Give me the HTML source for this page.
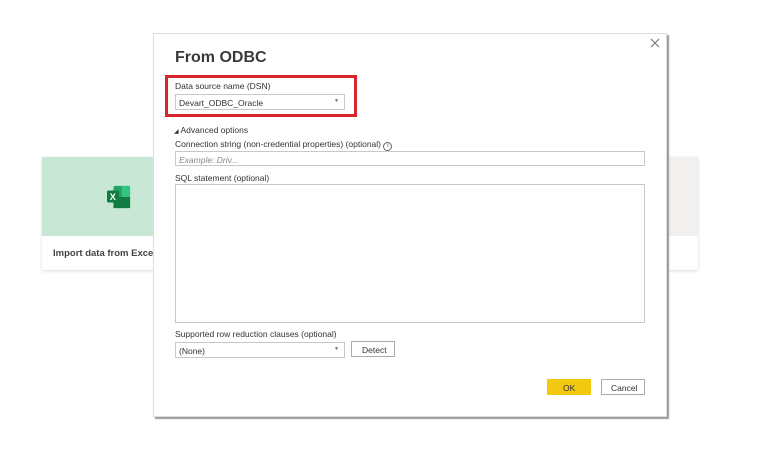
<!DOCTYPE html>
<html><head><style>
body{margin:0;width:768px;height:463px;background:#fff;position:relative;overflow:hidden;font-family:"Liberation Sans",sans-serif;color:#333}
.a{position:absolute}
.lbl{font-size:8.5px;color:#333;white-space:nowrap}
.box{border:1px solid #c8c8c8;background:#fff;box-sizing:border-box}
</style></head><body>
<div class="a" style="left:42px;top:157px;width:120px;height:113px;background:#fff;box-shadow:0 1px 3px rgba(0,0,0,.15)"></div>
<div class="a" style="left:42px;top:157px;width:120px;height:79px;background:#c8e8d5"></div>
<div class="a" style="left:53px;top:248px;font-size:9.5px;font-weight:bold;color:#444;white-space:nowrap">Import data from Excel</div>
<svg class="a" style="left:106px;top:185px" width="26" height="24" viewBox="0 0 28 26">
<rect x="8" y="1" width="18" height="24" rx="2" fill="#21a366"/><rect x="8" y="13" width="18" height="12" fill="#107c41"/><rect x="17" y="1" width="9" height="12" fill="#33c481"/>
<rect x="1" y="6" width="13" height="13" rx="1.5" fill="#107c41"/><text x="4" y="16.5" font-size="10" font-weight="bold" fill="#fff" font-family="Liberation Sans">X</text></svg>
<div class="a" style="left:650px;top:157px;width:48px;height:113px;background:#fff;box-shadow:0 1px 3px rgba(0,0,0,.15)"></div>
<div class="a" style="left:650px;top:157px;width:48px;height:79px;background:#f1f0ef"></div>

<div class="a" style="left:153px;top:33px;width:514px;height:384px;background:#fff;border:1px solid #ddd;box-sizing:border-box;box-shadow:2px 2px 1px #999"></div>
<svg class="a" style="left:650px;top:38px" width="10" height="10"><path d="M1 1L9 9M9 1L1 9" stroke="#777" stroke-width="1.2"/></svg>
<div class="a" style="left:175px;top:49px;font-size:16px;font-weight:bold;color:#3a3a3a">From ODBC</div>
<div class="a" style="left:165px;top:75px;width:192px;height:42px;border:3px solid #d9262d;box-sizing:border-box"></div>
<div class="a lbl" style="left:175px;top:81px">Data source name (DSN)</div>
<div class="a box" style="left:175px;top:94px;width:170px;height:16px"></div>
<div class="a lbl" style="left:179px;top:98px">Devart_ODBC_Oracle</div>
<div class="a" style="left:334px;top:98px;font-size:5px;color:#666">▼</div>
<div class="a lbl" style="left:174px;top:125px"><span style="font-size:6px">◢</span> Advanced options</div>
<div class="a lbl" style="left:175px;top:139px">Connection string (non-credential properties) (optional) <span style="display:inline-block;width:7px;height:7px;border:1px solid #666;border-radius:50%;font-size:6px;text-align:center;line-height:7px">i</span></div>
<div class="a box" style="left:175px;top:151px;width:470px;height:15px"></div>
<div class="a lbl" style="left:179px;top:155px;font-style:italic;color:#888">Example: Driv...</div>
<div class="a lbl" style="left:175px;top:173px">SQL statement (optional)</div>
<div class="a box" style="left:175px;top:184px;width:470px;height:139px"></div>
<div class="a lbl" style="left:175px;top:329px">Supported row reduction clauses (optional)</div>
<div class="a box" style="left:175px;top:342px;width:170px;height:16px"></div>
<div class="a lbl" style="left:179px;top:346px">(None)</div>
<div class="a" style="left:334px;top:346px;font-size:5px;color:#666">▼</div>
<div class="a box" style="left:351px;top:341px;width:44px;height:16px;border-color:#aaa"></div>
<div class="a lbl" style="left:362px;top:345px">Detect</div>
<div class="a" style="left:547px;top:379px;width:44px;height:16px;background:#f2c811"></div>
<div class="a lbl" style="left:563px;top:383px">OK</div>
<div class="a box" style="left:601px;top:379px;width:44px;height:16px;border-color:#aaa"></div>
<div class="a lbl" style="left:611px;top:383px">Cancel</div>
</body></html>
